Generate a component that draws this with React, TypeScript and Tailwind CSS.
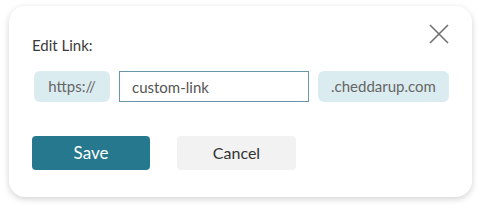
// ─── Edit link modal ──────────────────────────────────────────────────────────

export default function App() {
  return (
    <div
      className="w-[480px] h-[209px] bg-white pt-[6px] pl-[9px]"
      style={{ fontFamily: 'Lato, "Noto Sans", sans-serif' }}
    >
      <div className="relative w-[463px] h-[191px] bg-white rounded-[16px] shadow-[0_2px_6px_rgba(0,0,0,0.18)] pl-[23px] pr-[23px] pt-[29px]">
        <button className="absolute top-[18px] right-[23px] text-[#707070]">
          <svg width="20" height="20" viewBox="0 0 20 20" fill="none" stroke="currentColor" strokeWidth="1.6">
            <path d="M1 1L19 19M19 1L1 19" />
          </svg>
        </button>

        <h2 className="text-[15px] leading-[20px] text-[#3a3a3a]">Edit Link:</h2>

        {/* URL row */}
        <div className="mt-[16px] ml-[2px] flex items-center gap-[9px] h-[31px]">
          <span className="shrink-0 w-[76px] h-full flex items-center justify-center rounded-[6px] bg-[#dbecf0] text-[15px] text-[#666]">
            https://
          </span>
          <input
            defaultValue="custom-link"
            className="min-w-0 flex-1 h-full border border-[#6a97a6] px-[12px] text-[15px] text-[#555] outline-none"
          />
          <span className="shrink-0 w-[131px] h-full flex items-center justify-center rounded-[6px] bg-[#dbecf0] text-[15px] text-[#666]">
            .cheddarup.com
          </span>
        </div>

        {/* Actions */}
        <div className="mt-[34px] flex gap-[27px]">
          <button className="w-[118px] h-[34px] rounded-[4px] bg-[#25788d] text-white text-[17px]">Save</button>
          <button className="w-[119px] h-[34px] rounded-[4px] bg-[#f2f2f2] text-[#333] text-[16px]">Cancel</button>
        </div>
      </div>
    </div>
  );
}
